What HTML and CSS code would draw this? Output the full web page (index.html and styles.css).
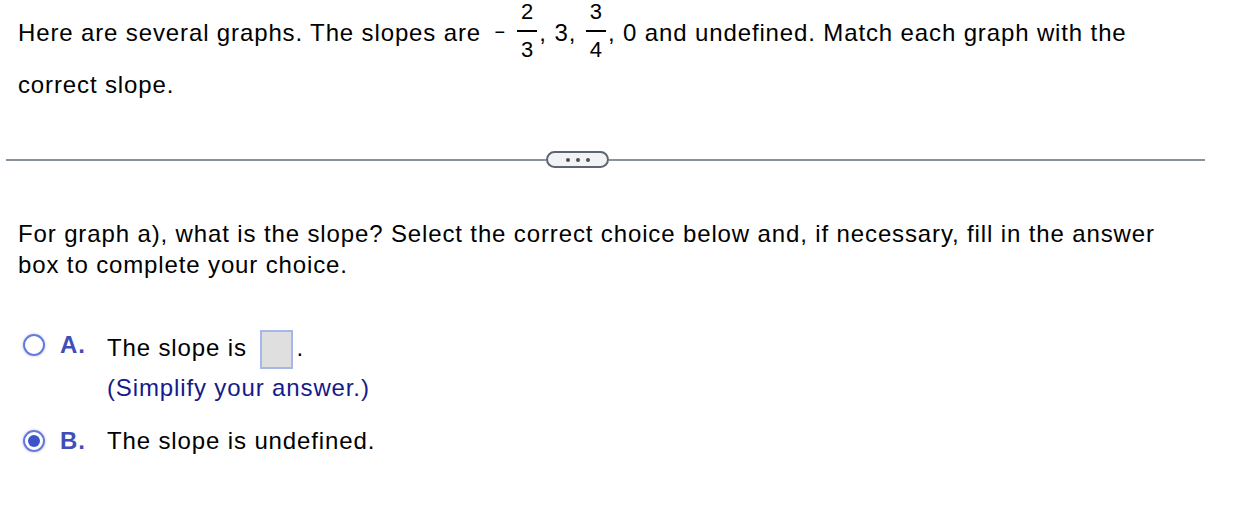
FILE: index.html
```html
<!DOCTYPE html>
<html>
<head>
<meta charset="utf-8">
<link rel="stylesheet" href="styles.css">
</head>
<body>
<div class="page">
  <p class="intro">Here are several graphs. The slopes are <span class="minus">&minus;</span><span class="frac"><span class="num">2</span><span class="den">3</span></span>, 3, <span class="frac"><span class="num">3</span><span class="den">4</span></span>, 0 and undefined. Match each graph with the correct slope.</p>

  <div class="divider">
    <span class="rule rule-left"></span>
    <span class="pill"><i></i><i></i><i></i></span>
    <span class="rule rule-right"></span>
  </div>

  <p class="question">For graph a), what is the slope? Select the correct choice below and, if necessary, fill in the answer box to complete your choice.</p>

  <div class="choices">
    <div class="choice">
      <span class="radio"></span>
      <span class="letter">A.</span>
      <div class="body">
        <div class="line">The slope is <span class="answer"></span>.</div>
        <div class="hint">(Simplify your answer.)</div>
      </div>
    </div>
    <div class="choice">
      <span class="radio checked"></span>
      <span class="letter">B.</span>
      <div class="body">
        <div class="line">The slope is undefined.</div>
      </div>
    </div>
  </div>
</div>
</body>
</html>
```

FILE: styles.css
```css
html, body {
  margin: 0;
  padding: 0;
  background: #fff;
}
body {
  font-family: "Liberation Sans", Arial, Helvetica, sans-serif;
  color: #000;
  font-size: 24px;
  letter-spacing: 0.87px;
}
.page {
  padding-left: 18px;
}
.intro {
  margin: 0;
  width: 1170px;
  line-height: 45px;
}
.minus {
  display: inline-block;
  font-size: 18px;
  letter-spacing: 0;
  margin: 0 10px 0 6px;
  vertical-align: 3px;
}
.frac {
  display: inline-block;
  text-align: center;
  vertical-align: -16px;
  font-size: 22px;
  line-height: 24px;
  letter-spacing: 0;
  margin: 0 2px;
}
.frac .num {
  display: block;
  padding: 0 4px 6px;
  border-bottom: 2px solid #000;
}
.frac .den {
  display: block;
  padding-top: 6px;
}
.divider {
  display: flex;
  align-items: center;
  margin: 44px 0 0 -12px;
  width: 1199px;
}
.rule {
  height: 2px;
  background: #8a929c;
}
.rule-left {
  width: 540px;
}
.rule-right {
  flex: 1;
}
.pill {
  width: 63px;
  height: 17px;
  box-sizing: border-box;
  border: 2px solid #5b6672;
  border-radius: 9px;
  background: #f1f3f5;
  display: flex;
  align-items: center;
  justify-content: center;
  gap: 6px;
}
.pill i {
  width: 4px;
  height: 4px;
  border-radius: 50%;
  background: #4a5059;
}
.question {
  margin: 50px 0 0 0;
  width: 1170px;
  line-height: 31px;
}
.choices {
  margin-top: 50px;
  display: flex;
  flex-direction: column;
  gap: 20px;
}
.choice {
  display: flex;
  align-items: flex-start;
}
.radio {
  width: 22px;
  height: 22px;
  border: 2px solid #6579da;
  border-radius: 50%;
  box-sizing: border-box;
  margin: 4px 0 0 5px;
  box-shadow: 0 0 2px 1px rgba(101, 121, 218, 0.22);
  display: flex;
  align-items: center;
  justify-content: center;
}
.radio.checked::after {
  content: "";
  width: 12px;
  height: 12px;
  border-radius: 50%;
  background: #3d53c9;
}
.letter {
  font-weight: bold;
  color: #3f4fb8;
  margin-left: 15px;
  width: 47px;
  line-height: 30px;
}
.body {
  display: flex;
  flex-direction: column;
}
.line {
  line-height: 30px;
}
.answer {
  display: inline-block;
  width: 33px;
  height: 39px;
  border: 2px solid #a6b7e8;
  background: #dfdfdf;
  box-sizing: border-box;
  vertical-align: middle;
  margin: 0 3px 0 6px;
}
.hint {
  color: #151a8a;
  line-height: 37px;
}
```
